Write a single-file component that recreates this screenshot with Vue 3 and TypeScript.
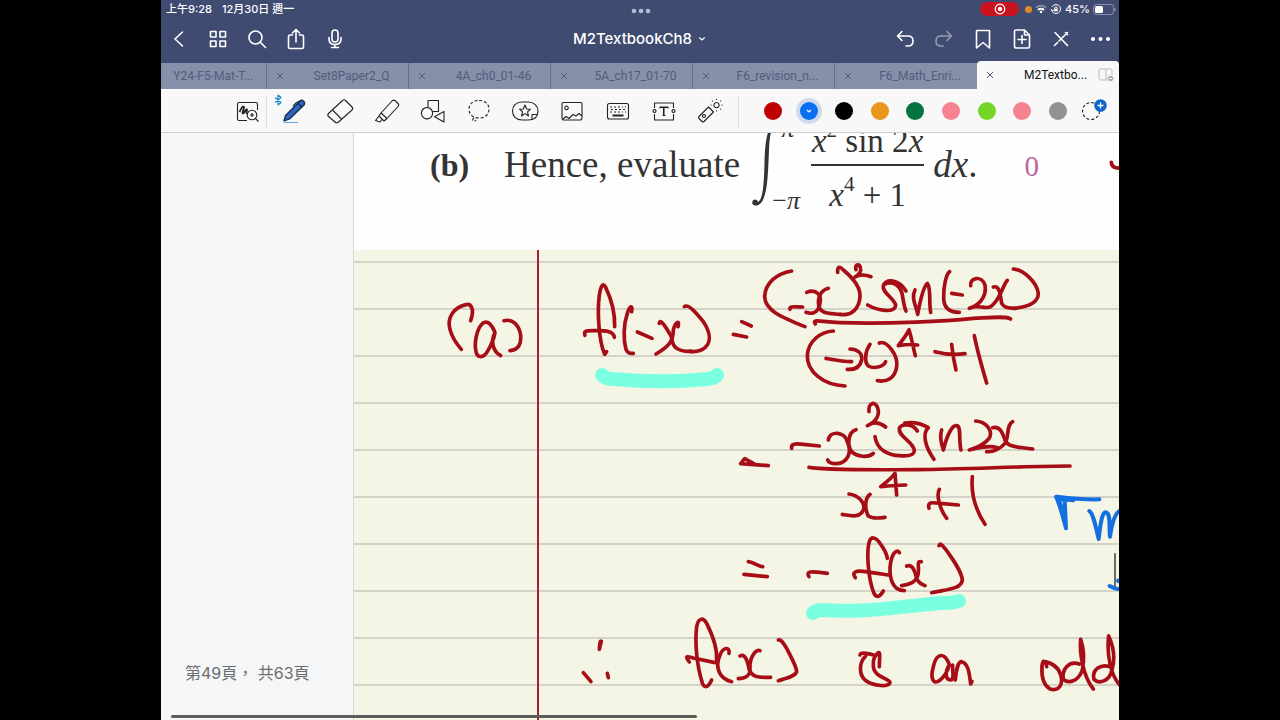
<script setup lang="ts">
import { ref } from 'vue'

interface Tool { label: string; paths: string[]; dashed?: boolean }
interface Ink { x: number; y: number; strokes: string[] }

const selectedTab = ref('M2Textbo...')
const tabs: string[] = ['Y24-F5-Mat-T...', 'Set8Paper2_Q', '4A_ch0_01-46', '5A_ch17_01-70', 'F6_revision_n...', 'F6_Math_Enri...', 'M2Textbo...']

const tools: Tool[] = [
  { label: 'Eraser', paths: ['M17.500 4.500 Q19 3 20.500 4.500 L27 11 Q28.500 12.500 27 14 L13.500 26 Q11.500 27.500 10 26 L3.500 20.500 Q2 19 3.500 17.500 Z', 'M7.500 14 L16.500 23'] },
  { label: 'Highlighter', paths: ['M9 17 L20.500 4.500 Q22 3.500 23.500 5 L26 7.500 Q27.500 9 26 10.500 L15 22.500 Z', 'M9 17 L7 20 L12 25 L15 22.500', 'M7 20 L3.500 24.500 L8 26 L10 23.500'] },
  { label: 'Shapes', paths: ['M10 11 V4.500 H20.500 V15.500 H14.500', 'M9 11.500 A5.700 5.700 0 1 0 9.010 11.500', 'M26 15.500 V26 L16.500 20.800 Z'] },
  { label: 'Lasso', paths: ['M15 4.500 C21 4.500 25 8 25 13 C25 18.500 21 22 15 22 C9 22 5 18.500 5 13 C5 8 9 4.500 15 4.500 M10 22 C7 24 10 27 12 24'], dashed: true },
  { label: 'Stickers', paths: ['M12 6 H18 C24 6 28 10 28 15 C28 21 24 24 18 24 H12 C6 24 2.500 20 2.500 15 C2.500 10 6 6 12 6 Z', 'M15 9 L16.700 13 L20.500 13.200 L17.500 15.800 L18.500 20 L15 17.600 L11.500 20 L12.500 15.800 L9.500 13.200 L13.300 13 Z', 'M27 18.500 H22 V23.500'] },
  { label: 'Image', paths: ['M6.500 6.500 H23.500 Q25 6.500 25 8 V22 Q25 24 23.500 24 H6.500 Q5 24 5 22 V8 Q5 6.500 6.500 6.500 Z', 'M9.500 10 A1.800 1.800 0 1 0 9.510 10', 'M6 23 L9 20.500 L12 22.500 L16 18.500 L19 20 L22 17.500 L25 20'] },
  { label: 'Keyboard', paths: ['M6.500 7.500 H23.500 Q25.500 7.500 25.500 9.500 V21 Q25.500 23 23.500 23 H6.500 Q4.500 23 4.500 21 V9.500 Q4.500 7.500 6.500 7.500 Z', 'M7 11 H9 M11 11 H13 M15 11 H17 M19 11 H20 M22 11 H23 M8 13.500 H10 M12 13.500 H14 M16 13.500 H18 M20 13.500 H22 M7 16 H9 M11 16 H13 M15 16 H17 M19 16 H20 M22 16 H23 M9.500 19 H20.500 M9.500 20 H20.500'] },
  { label: 'Text', paths: ['M5.500 12 V7 H24.500 V12 M24.500 18 V24 H5.500 V18 M5.500 13.500 A1.500 1.500 0 1 0 5.510 13.500 M24.500 13.500 A1.500 1.500 0 1 0 24.510 13.500', 'M11 12.500 V11 H19 V12.500 M11 11.500 H19 M15 11 V19.500 M14.500 11 V19.500 M13.500 19.500 H16.500'] },
  { label: 'Laser pointer', paths: ['M4 20.500 L13.500 11 L18.500 16 L9 25.500 Q8 26.500 7 25.500 L4 22.500 Q3 21.500 4 20.500 Z', 'M9 18.500 A1.500 1.500 0 1 0 9.010 18.500', 'M21.500 6.500 A2.600 2.600 0 1 0 21.510 6.500 M21.500 4 V3 M21.500 14.500 V15.500 M16.500 9 H15.500 M26.500 9 H27.500 M17.700 5.500 L17 4.700 M25.300 5.500 L26 4.700 M25.300 12.800 L26 13.500'] },
]

const colours: string[] = ['#c00000', '#0a6ff0', '#000000', '#ea951c', '#05733f', '#f58490', '#73d628', '#f58490', '#929292']
const selectedColour = ref(1)

const ink: Ink[] = [
  { x: 430, y: 260, strokes: [
    'M122 182 C135 145 122 130 108 134 C70 142 50 175 60 208 C66 232 80 252 94 268',
    'M195 218 C185 192 172 180 158 190 C140 205 132 250 138 275 C142 295 160 295 172 275 C184 255 192 235 195 218 C180 245 190 275 212 287',
    'M222 182 C245 176 265 192 271 220 C276 252 265 270 240 272',
    'M530 275 L524 283 C505 240 502 150 508 105 C512 80 518 65 527 82 C550 130 555 165 554 200',
    'M465 226 C460 210 470 212 500 212 C525 212 550 212 553 232',
    'M605 155 C608 135 600 135 592 160 C580 195 580 240 588 268 C592 278 600 281 610 280',
    'M622 216 L666 235',
    'M688 190 C690 172 710 205 724 230 C728 262 740 275 785 274',
    'M744 200 C750 178 736 185 730 210 C730 245 715 260 678 282',
    'M763 140 C775 130 800 160 820 185 C840 215 845 245 825 263 C812 274 795 276 780 274',
    'M935 185 L964 198 M910 223 L950 231',
  ] },
  { x: 740, y: 255, strokes: [
    'M155 48 C110 55 75 85 74 125 C75 165 120 185 195 215',
    'M150 163 C147 152 165 156 188 156',
    'M200 112 C230 100 246 122 240 145 C236 170 220 180 198 172',
    'M265 100 C245 105 232 125 236 150 C240 178 270 175 300 178',
    'M293 52 C292 35 298 32 310 45 C340 70 362 95 360 125 C358 160 335 184 300 178',
    'M348 44 C343 25 360 25 362 42 C364 55 352 62 345 66 C360 58 375 58 393 65',
    'M498 108 C475 72 440 70 430 92 C425 112 462 130 467 150 C466 178 410 165 383 150',
    'M432 88 C460 74 480 95 486 115 C490 135 492 155 498 168',
    'M525 105 C512 130 530 155 533 178 C540 140 550 95 562 85 C574 100 566 140 572 172',
    'M629 50 C620 55 610 90 611 130 C612 165 635 172 658 172',
    'M635 115 L667 120',
    'M692 92 C688 68 725 60 735 90 C742 130 710 155 688 160 C710 145 735 165 752 155 C782 135 788 90 802 76',
    'M760 96 C780 90 780 120 785 145 C795 162 810 158 825 160',
    'M820 42 C850 45 890 80 895 115 C895 140 870 155 825 160',
    'M226 207 C215 190 240 201 300 203 C450 208 620 198 700 190 C760 187 800 183 812 192',
    'M280 228 C240 230 205 260 202 300 C200 350 250 390 315 393',
    'M258 310 C285 315 310 320 335 320',
    'M330 282 C352 282 368 295 365 315 C360 338 345 345 322 343',
    'M390 268 C375 290 372 320 385 333 C400 342 430 337 437 320',
    'M418 264 C440 255 475 300 470 335 C465 370 440 382 412 377',
    'M526 302 C520 280 515 250 507 224 C500 240 485 258 475 272 C500 268 520 268 533 270',
    'M585 290 C615 298 650 300 675 296 M635 268 C638 295 642 320 648 345',
    'M703 242 C712 290 730 350 740 384',
  ] },
  { x: 730, y: 395, strokes: [
    'M32 206 L44 191 L74 207 M32 206 L115 212',
    'M185 160 C182 146 195 145 220 148 L268 153',
    'M295 135 C300 105 345 110 352 140 C368 175 350 205 320 206 C305 206 295 202 293 195',
    'M378 104 C355 110 350 150 365 170 C380 185 415 190 430 175',
    'M417 50 C415 25 430 20 440 32 C455 60 435 83 412 92 C430 80 450 82 467 96',
    'M435 125 C440 160 470 182 510 182 C545 185 565 175 545 150 C530 130 505 120 508 100 C515 85 548 85 562 108',
    'M524 84 C550 80 572 84 595 98 C576 115 585 155 612 193',
    'M635 105 C628 125 635 150 640 165 C650 125 665 90 680 92 C695 95 685 135 693 165',
    'M737 78 C770 80 792 110 776 132 C760 150 735 160 718 165 C750 157 780 150 802 158',
    'M788 98 C812 92 820 120 825 135 C835 160 870 155 908 162',
    'M848 80 C828 90 838 125 825 145 C812 160 790 172 770 170',
    'M237 217 C250 222 400 225 560 224 C720 222 900 213 1020 213',
    'M357 297 C385 300 408 325 400 345 C390 370 360 362 337 358',
    'M420 298 C404 310 404 340 414 362 C425 372 445 370 465 367',
    'M500 300 L495 235 C485 250 465 265 452 275 C480 272 500 270 527 270',
    'M597 340 C592 320 605 322 630 325 L685 330 M628 283 C618 300 630 345 650 370',
    'M727 245 C722 300 740 350 765 388',
  ] },
  { x: 730, y: 530, strokes: [
    'M55 95 C65 95 85 108 98 110 M42 133 L112 140',
    'M237 140 C225 120 250 125 292 130',
    'M460 183 C450 200 440 205 432 190 C412 140 410 60 418 35 C425 15 440 25 450 40 C465 60 470 70 472 85',
    'M376 143 C363 125 380 122 400 124 C430 128 455 132 475 135',
    'M508 68 C505 58 490 65 485 85 C475 120 480 160 500 175 C508 180 515 182 523 182',
    'M530 108 C550 100 556 130 560 145 C565 160 575 162 585 167',
    'M574 95 C556 90 572 120 562 140 C555 160 535 165 515 167',
    'M627 47 C630 35 640 50 650 62 C670 90 695 125 697 150 C694 178 650 178 605 188',
  ] },
  { x: 560, y: 610, strokes: [
    'M124 94 L118 118 M121 94 L118 112 M70 188 L93 215 M142 190 L145 203',
    'M455 210 C445 232 435 235 428 222 C408 160 405 90 410 50 C415 25 428 20 440 40 C465 90 472 120 470 150',
    'M388 156 C372 135 382 139 400 144 L465 158',
    'M507 130 C510 110 490 110 480 135 C465 170 475 205 515 215',
    'M540 138 C555 130 562 150 568 180 C580 205 600 202 632 202',
    'M600 122 C590 115 568 140 570 175 C571 200 555 205 535 206',
    'M655 90 C665 88 670 100 680 115 C695 145 710 170 710 185 C705 200 680 205 655 212',
  ] },
  { x: 830, y: 620, strokes: [
    'M90 105 C92 95 110 100 136 106 M107 108 C85 130 88 165 105 180 C130 200 180 202 180 187 C175 175 132 170 130 140 C128 115 135 108 145 98 C152 95 148 120 148 140',
    'M358 134 C345 98 320 95 310 140 C300 175 310 190 322 185 C340 178 355 150 358 134 C345 155 345 180 362 180 C375 178 366 150 368 135',
    'M376 180 C378 150 385 125 395 125 C415 130 418 160 422 192 L426 184',
    'M650 140 C648 122 636 118 636 140 C634 170 640 195 660 207 C690 215 700 190 692 165 C685 140 665 128 640 124',
    'M748 132 C715 120 695 150 700 178 C715 192 745 185 757 150 C765 110 758 75 752 58 C748 100 760 170 790 207',
    'M845 142 C812 128 785 150 792 178 C806 192 838 186 846 150 C858 110 846 70 836 48 C830 100 840 170 875 200',
  ] },
  { x: 740, y: 125, strokes: ['M1114 112 C1115 125 1125 132 1145 128'] },
]

const blueInk: Ink[] = [
  { x: 730, y: 395, strokes: [
    'M1108 313 C1060 315 1020 310 978 305 C990 330 1000 370 1008 400 L1004 312 M984 310 L1000 350 M984 312 L1030 316',
    'M1078 348 C1090 355 1098 400 1106 432 C1110 400 1115 350 1127 352 C1144 355 1136 395 1140 425 C1145 390 1155 350 1174 345',
  ] },
  { x: 730, y: 530, strokes: ['M1139 168 C1150 174 1160 178 1172 178 M1164 152 L1174 158'] },
]
</script>

<template>
  <div class="screen">
    <main class="tablet">
      <header class="top">
        <div class="status">
          <div class="clock"><span>上午9:28</span><span>12月30日 週一</span></div>
          <svg class="grabber" viewBox="0 0 20 6"><circle cx="3" cy="3" r="2.300" /><circle cx="10" cy="3" r="2.300" /><circle cx="17" cy="3" r="2.300" /></svg>
          <div class="indicators">
            <span class="record">
              <svg viewBox="0 0 12 12" width="12" height="12"><circle cx="6" cy="6" r="4.800" fill="none" stroke="#fff" stroke-width="1.200" /><circle cx="6" cy="6" r="2.200" fill="#fff" /></svg>
            </span>
            <span class="mic-dot"></span>
            <svg viewBox="0 0 12 10" width="12" height="10" fill="none" stroke-width="1.800"><path d="M1 3.800 Q6 -0.500 11 3.800" stroke="#8791ae" /><path d="M3 6 Q6 3.500 9 6" stroke="#fff" /><circle cx="6" cy="8" r="1.200" fill="#fff" /></svg>
            <svg viewBox="0 0 12 12" width="12" height="12" fill="none" stroke="#fff" stroke-width="1"><path d="M2 4 A4.500 4.500 0 1 1 2 8 M1 6 L2 8 L4 7 M4.800 6 V4.500 Q6 3 7.200 4.500 V6" /><rect x="4.300" y="5.800" width="3.400" height="2.600" fill="#fff" stroke="none" /></svg>
            <span>45%</span>
            <svg viewBox="0 0 23 11" width="23" height="11"><rect x=".5" y=".5" width="20" height="10" rx="3" fill="none" stroke="#8a93ae" /><rect x="2" y="2" width="8" height="7" rx="1.500" fill="#fff" /><path d="M22 4 V7" stroke="#8a93ae" stroke-width="1.300" /></svg>
          </div>
        </div>
        <nav class="bar">
          <div class="group">
            <button aria-label="Back"><svg viewBox="0 0 24 24"><path d="M15.500 5 L8 12 L15.500 19" /></svg></button>
            <button aria-label="Thumbnails"><svg viewBox="0 0 24 24"><path d="M4.500 4.500 H10 V10 H4.500 Z M14 4.500 H19.500 V10 H14 Z M4.500 14 H10 V19.500 H4.500 Z M14 14 H19.500 V19.500 H14 Z" /></svg></button>
            <button aria-label="Search"><svg viewBox="0 0 24 24"><circle cx="10.500" cy="10.500" r="6.500" /><path d="M15.500 15.500 L20.500 20.500" /></svg></button>
            <button aria-label="Share"><svg viewBox="0 0 24 24"><path d="M8.500 8 H6 Q4.500 8 4.500 9.500 V20 Q4.500 21.500 6 21.500 H18 Q19.500 21.500 19.500 20 V9.500 Q19.500 8 18 8 H15.500 M12 15 V2.500 M8.500 6 L12 2.500 L15.500 6" /></svg></button>
            <button aria-label="Record"><svg viewBox="0 0 24 24"><path d="M12 3 Q15 3 15 6 V12 Q15 15 12 15 Q9 15 9 12 V6 Q9 3 12 3 Z M6 10.500 V12 Q6 17.500 12 17.500 Q18 17.500 18 12 V10.500 M12 17.500 V20.500 M8.500 20.500 H15.500" /></svg></button>
          </div>
          <button class="title">M2TextbookCh8<svg viewBox="0 0 8 6"><path d="M1.300 1.500 L4 4 L6.700 1.500" /></svg></button>
          <div class="group end">
            <button aria-label="Undo"><svg viewBox="0 0 24 24"><path d="M9 4.500 L4.500 9 L9 13.500 M4.500 9 H15 Q20 9 20 14 Q20 19 15 19 H13" /></svg></button>
            <button aria-label="Redo" disabled><svg viewBox="0 0 24 24"><path d="M15 4.500 L19.500 9 L15 13.500 M19.500 9 H9 Q4 9 4 14 Q4 19 9 19 H11" /></svg></button>
            <button aria-label="Bookmark"><svg viewBox="0 0 24 24"><path d="M6 3.500 H18 Q18.500 3.500 18.500 4 V21 L12 15.500 L5.500 21 V4 Q5.500 3.500 6 3.500 Z" /></svg></button>
            <button aria-label="Add page"><svg viewBox="0 0 24 24"><path d="M6.500 3 H14.500 L19.500 8 V19.500 Q19.500 21 18 21 H6.500 Q4.500 21 4.500 19.500 V4.500 Q4.500 3 6.500 3 Z M14.500 3 V8 H19.500 M12 8.500 V16.500 M8 12.500 H16" /></svg></button>
            <button aria-label="Read only"><svg viewBox="0 0 24 24"><path d="M6 5.500 L18.500 18.500 M18.500 5.500 L10 14 M8.500 15.500 L5.500 18.500 M16.500 5.500 L18.500 7.500" /></svg></button>
            <button aria-label="More"><svg viewBox="0 0 24 24"><path class="solid" d="M5 10 A2 2 0 1 0 5.010 10 M12.500 10 A2 2 0 1 0 12.510 10 M20 10 A2 2 0 1 0 20.010 10" /></svg></button>
          </div>
        </nav>
      </header>

      <div class="tabs">
        <div v-for="(tab, i) in tabs" :key="tab" class="tab" :class="{ first: i === 0, active: tab === selectedTab }">
          <button v-if="i > 0" class="close" :aria-label="'Close ' + tab"><svg viewBox="0 0 8 8"><path d="M1 1 L7 7 M7 1 L1 7" /></svg></button>
          <button class="name" @click="selectedTab = tab">{{ tab }}</button>
          <svg v-if="i === 6" class="split" viewBox="0 0 16 14"><path d="M9 12 H2.500 Q1 12 1 10.500 V2.500 Q1 1 2.500 1 H12.500 Q14 1 14 2.500 V7 M8 1 V12" fill="none" stroke="#b9b9bd" /><circle cx="12.500" cy="10.500" r="2.800" fill="#b0b0b4" /><path d="M11 10.500 H14" stroke="#f8f8f8" /></svg>
        </div>
      </div>

      <div class="tools">
        <button class="zoom" aria-label="Zoom window">
          <svg viewBox="0 0 26 26"><path d="M12 22.500 H4 Q2.500 22.500 2.500 21 V6 Q2.500 4.500 4 4.500 H21 Q22.500 4.500 22.500 6 V12" /><path class="bold" d="M4.500 14 C6 11 7.500 7.500 9 9 C9.500 10.500 6.500 15 8 15.500 C9.500 15.500 10.500 10.500 12 11.500 C12.500 12.500 10.500 15 12 15.500" /><circle cx="17" cy="17" r="4.800" /><path d="M15 17 H19 M17 15 V19 M20.500 20.500 L23.500 23.500" /></svg>
        </button>
        <span class="rule"></span>
        <div class="pens">
          <button aria-label="Pen">
            <svg viewBox="0 0 30 30"><path d="M5 25 L6.500 19.500 L21 5 Q22.500 3.500 24.500 5 Q26.500 7 25 9 L10.500 23 Z M18.500 7 L23.500 11.500" fill="#2f66b8" stroke="#12294f" stroke-width="1.300" /><path d="M21 5 L17.500 6.500 L14 10" stroke="#12294f" /><path d="M5 26.500 H19" stroke="#6ea6e0" /></svg>
            <svg class="bluetooth" viewBox="0 0 8 12"><path d="M1 3.500 L7 8.500 L4 11 V1 L7 3.500 L1 8.500" /></svg>
          </button>
          <button v-for="tool in tools" :key="tool.label" :aria-label="tool.label">
            <svg viewBox="0 0 30 30" :class="{ dashed: tool.dashed }"><path v-for="p in tool.paths" :key="p" :d="p" /></svg>
          </button>
        </div>
        <span class="rule"></span>
        <div class="palette">
          <button v-for="(c, i) in colours" :key="i" :aria-label="'Colour ' + (i + 1)" @click="selectedColour = i">
            <span class="swatch" :class="{ chosen: i === selectedColour }" :style="{ background: c }">
              <svg v-if="i === selectedColour" viewBox="0 0 8 6"><path d="M2 2 L4 4 L6 2" /></svg>
            </span>
          </button>
          <button aria-label="Add colour">
            <svg class="add" viewBox="0 0 30 30"><circle cx="13" cy="15" r="8.500" stroke-dasharray="3 2" /><circle class="badge" cx="22.500" cy="9.500" r="6.300" /><path class="plus" d="M22.500 6.500 V12.500 M19.500 9.500 H25.500" /></svg>
          </button>
        </div>
      </div>

      <section class="canvas">
        <aside class="gutter">第49頁， 共63頁</aside>
        <article class="page">
          <div class="question">
            <b class="part">(b)</b>
            <span class="lead">Hence, evaluate</span>
            <svg class="integral" viewBox="0 0 26 88"><path d="M25 0 C20 5 18.500 13 18 27 C17 48 17 66 12 77 C9 83 4 84 1.500 81 C0 76 6 75 7 79 C12 77 13 60 13.500 40 C14 18 16 3 25 0 Z" /></svg>
            <span class="limits"><i>π</i><span>−<i>π</i></span></span>
            <span class="fraction">
              <span class="over"><i>x</i><sup>2</sup> sin 2<i>x</i></span>
              <span class="under"><i>x</i><sup>4</sup> + 1</span>
            </span>
            <span class="dx"><i>dx</i>.</span>
            <span class="answer">0</span>
          </div>
          <div class="lined"></div>
        </article>

        <svg class="ink" viewBox="161 133 958 587">
          <g class="marker">
            <path d="M602 375 Q606 379 612 379 C645 382 680 382 708 379 Q715 378 717 375" />
            <path d="M813 613 Q816 610 822 610 C860 613 900 607 940 603 Q954 603 959 601" />
          </g>
          <g v-for="(g, i) in ink" :key="i" class="red" :transform="`translate(${g.x} ${g.y}) scale(.33333)`">
            <path v-for="s in g.strokes" :key="s" :d="s" />
          </g>
          <g v-for="(g, i) in blueInk" :key="'b' + i" class="blue" :transform="`translate(${g.x} ${g.y}) scale(.33333)`">
            <path v-for="s in g.strokes" :key="s" :d="s" />
          </g>
        </svg>
        <span class="scroll-x"></span>
        <span class="scroll-y"></span>
      </section>
    </main>
  </div>
</template>

<style>
body { margin: 0; background: #000; }
</style>

<style scoped>
.screen {
  display: grid;
  grid-template-columns: 161fr 958fr 161fr;
  min-height: 100vh;
  background: #000;
  font-family: Inter, "Noto Sans CJK TC", sans-serif;
}
.tablet {
  grid-column: 2;
  display: flex;
  flex-direction: column;
  min-width: 0;
  overflow: hidden;
}
button {
  margin: 0;
  padding: 0;
  border: 0;
  background: none;
  color: inherit;
  font: inherit;
  cursor: pointer;
}
svg { display: block; }

.top { background: #3f4b70; color: #fff; }
.status {
  display: grid;
  grid-template-columns: 1fr 20px 1fr;
  align-items: center;
  height: 18px;
  padding: 0 3px 0 5px;
  font-size: 11px;
  line-height: 18px;
  font-weight: 500;
}
.clock { display: flex; gap: 10px; white-space: nowrap; }
.grabber { width: 20px; height: 6px; margin-top: 4px; fill: #b4bdd6; }
.indicators { display: flex; align-items: center; justify-content: flex-end; gap: 3px; }
.record {
  display: flex;
  align-items: center;
  justify-content: center;
  width: 39px;
  height: 14px;
  margin-right: 3px;
  border-radius: 7px;
  background: #c9131e;
}
.mic-dot { width: 7px; height: 7px; border-radius: 50%; background: #e08b27; }

.bar {
  display: grid;
  grid-template-columns: 1fr auto 1fr;
  align-items: center;
  height: 45px;
  padding: 0 7px 4px 6px;
  box-sizing: border-box;
}
.group { display: flex; gap: 15px; }
.group.end { justify-content: flex-end; }
.group button { width: 24px; height: 24px; }
.group svg {
  width: 24px;
  height: 24px;
  fill: none;
  stroke: #fff;
  stroke-width: 1.6;
  stroke-linecap: round;
  stroke-linejoin: round;
}
.group .solid { fill: #fff; stroke: none; }
.group button:disabled { opacity: 0.45; }
.title { display: flex; align-items: center; gap: 6px; font-size: 15px; font-weight: 500; line-height: 24px; }
.title svg { width: 8px; height: 6px; fill: none; stroke: #fff; stroke-width: 1.2; }

.tabs { display: flex; height: 26px; background: #8590ab; }
.tab {
  display: flex;
  align-items: center;
  flex: 142 1 142px;
  min-width: 0;
  padding-left: 8px;
  border-right: 1px solid #66708e;
  box-sizing: border-box;
  color: #535c78;
  font-family: Roboto, sans-serif;
  font-size: 12px;
}
.tab.first { flex: 106 1 106px; padding-left: 0; }
.tab.active {
  height: 28px;
  margin-top: -2px;
  border-right: 0;
  border-radius: 4px 4px 0 0;
  background: #f8f8f8;
  color: #111;
}
.tab:nth-child(6) { border-right: 0; }
.close { width: 10px; height: 20px; }
.close svg { width: 8px; height: 8px; margin: 0 auto; fill: none; stroke: #535c78; }
.name { flex: 1; min-width: 0; padding-left: 10px; overflow: hidden; white-space: nowrap; line-height: 20px; }
.first .name { padding-left: 0; }
.active .name { padding-left: 18px; }
.split { width: 16px; height: 14px; margin-right: 5px; flex: none; }

.tools {
  display: flex;
  align-items: center;
  height: 44px;
  padding: 1px 8px 0 74px;
  box-sizing: border-box;
  border-bottom: 1px solid #cfcfd2;
  background: #f8f8f8;
}
.tools svg {
  width: 30px;
  height: 30px;
  flex: none;
  fill: none;
  stroke: #222;
  stroke-width: 1.1;
  stroke-linejoin: round;
}
.tools .dashed { stroke-dasharray: 3 2; }
.zoom, .tools .zoom svg { width: 26px; height: 26px; }
.tools .zoom .bold { stroke-width: 1.8; }
.rule { width: 1px; height: 31px; margin: 0 4px 0 5px; background: #dcdce0; }
.pens { display: flex; flex: 464 1 464px; }
.pens button, .palette button {
  position: relative;
  display: flex;
  align-items: center;
  justify-content: center;
  flex: 1;
  height: 40px;
}
.tools .bluetooth {
  position: absolute;
  top: 3px;
  left: 3px;
  width: 8px;
  height: 12px;
  stroke: #1686c9;
}
.palette { display: flex; box-sizing: border-box; flex: 369 1 369px; padding-left: 12px; }
.swatch {
  display: flex;
  align-items: center;
  justify-content: center;
  width: 18px;
  height: 18px;
  border-radius: 50%;
}
.swatch.chosen { box-shadow: 0 0 0 4px #d0daea; }
.tools .swatch svg { width: 8px; height: 6px; stroke: #fff; }
.tools .badge { fill: #0c68c8; stroke: none; }
.tools .plus { stroke: #fff; stroke-width: 1.3; }

.canvas { position: relative; display: flex; flex: 1; min-height: 587px; overflow: hidden; }
.gutter {
  display: flex;
  align-items: flex-end;
  flex: none;
  width: 192px;
  padding: 0 0 35px 24px;
  box-sizing: border-box;
  background: #f5f6f7;
  color: #6c6d70;
  font-size: 16px;
  line-height: 24px;
}
.page {
  display: flex;
  flex: 1;
  flex-direction: column;
  min-width: 0;
  overflow: hidden;
  border-left: 1px solid #d9dad8;
}
.question {
  display: flex;
  align-items: flex-start;
  height: 117px;
  padding: 12px 0 0 76px;
  box-sizing: border-box;
  overflow: hidden;
  background: #fefefe;
  color: #333;
  font-family: "Liberation Serif", serif;
  font-size: 37px;
  line-height: 40px;
  white-space: nowrap;
}
.part { width: 74px; font-size: 32px; }
.integral { width: 26px; height: 88px; flex: none; margin: -22px 0 0 11px; fill: #333; }
.limits { display: flex; flex-direction: column; gap: 44px; margin: -30px 0 0 -5px; font-size: 26px; line-height: 28px; }
.limits > i { padding-left: 9px; }
.fraction { display: flex; flex-direction: column; margin: -22px 0 0 11px; font-size: 33px; line-height: 36px; text-align: center; }
.fraction sup { font-size: 21px; line-height: 0; vertical-align: 15px; }
.over { padding: 0 1px 5px; border-bottom: 2px solid #333; }
.under { padding-top: 11px; }
.dx { margin-left: 9px; }
.answer { margin-left: 47px; color: #b9669c; font-size: 29px; line-height: 42px; }
.lined {
  flex: 1;
  background:
    linear-gradient(#a3202e, #a3202e) 183px 0 / 2px 100% no-repeat,
    repeating-linear-gradient(#f5f5e5 0 11px, #d3d3ca 11px 13px, #f5f5e5 13px 47px);
}
.ink { position: absolute; top: 0; left: 0; width: 958px; height: 587px; }
.ink path { fill: none; stroke-linecap: round; stroke-linejoin: round; }
.marker path { stroke: #7affe1; stroke-width: 14; }
.red path { stroke: #a60d16; stroke-width: 11; }
.blue path { stroke: #1470e0; stroke-width: 12; }
.scroll-x { position: absolute; bottom: 2px; left: 1%; width: 55%; height: 3px; border-radius: 2px; background: #5c5c58; }
.scroll-y { position: absolute; top: 420px; right: 3px; width: 2px; height: 34px; border-radius: 1px; background: #6b6b66; }
</style>
